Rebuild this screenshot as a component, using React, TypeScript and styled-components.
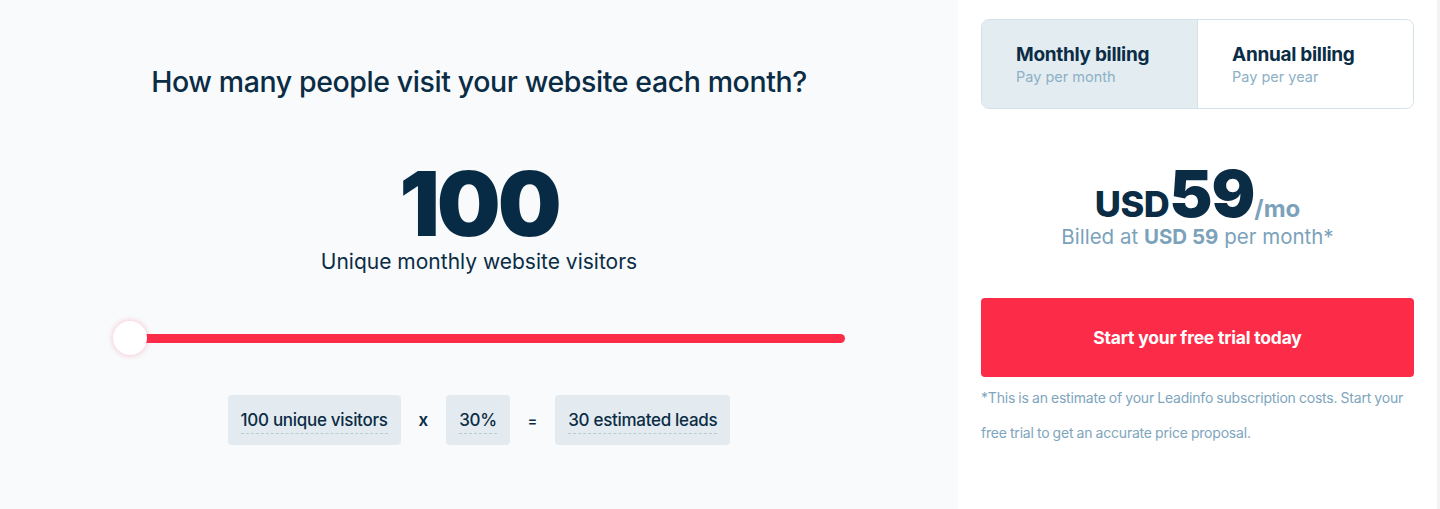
import React, { useState } from 'react';
import styled, { createGlobalStyle, css } from 'styled-components';

const navy = '#0b2c45';
const muted = '#7ba2ba';
const red = '#fc2c49';

const GlobalStyle = createGlobalStyle`
  html, body {
    margin: 0;
    padding: 0;
    background: #ffffff;
  }

  body {
    font-family: Inter, "Noto Sans", Arial, sans-serif;
    color: ${navy};
  }
`;

type Plan = 'monthly' | 'annual';

const plans: { id: Plan; title: string; sub: string }[] = [
  { id: 'monthly', title: 'Monthly billing', sub: 'Pay per month' },
  { id: 'annual', title: 'Annual billing', sub: 'Pay per year' },
];

const App: React.FC = () => {
  const [plan, setPlan] = useState<Plan>('monthly');
  const visitors = 100;
  const rate = 30;

  return (
    <Page>
      <GlobalStyle />
      <Calculator>
        <Question>How many people visit your website each month?</Question>
        <BigNumber>{visitors}</BigNumber>
        <Caption>Unique monthly website visitors</Caption>
        <Slider>
          <Track />
          <Thumb />
        </Slider>
        <Equation>
          <Term>
            <Underlined>{`${visitors} unique visitors`}</Underlined>
          </Term>
          <Operator>x</Operator>
          <Term>
            <Underlined>{`${rate}%`}</Underlined>
          </Term>
          <Operator small>=</Operator>
          <Term>
            <Underlined>{`${(visitors * rate) / 100} estimated leads`}</Underlined>
          </Term>
        </Equation>
      </Calculator>
      <Pricing>
        <Toggle>
          {plans.map((p) => (
            <ToggleOption
              key={p.id}
              active={plan === p.id}
              onClick={() => setPlan(p.id)}
            >
              <OptionTitle>{p.title}</OptionTitle>
              <OptionSub>{p.sub}</OptionSub>
            </ToggleOption>
          ))}
        </Toggle>
        <Price>
          <Currency>USD</Currency>
          <Amount>59</Amount>
          <Period>/mo</Period>
        </Price>
        <Billed>
          Billed at <strong>USD 59</strong> per month*
        </Billed>
        <TrialButton>Start your free trial today</TrialButton>
        <Disclaimer>
          *This is an estimate of your Leadinfo subscription costs. Start your
          free trial to get an accurate price proposal.
        </Disclaimer>
      </Pricing>
      <Edge />
    </Page>
  );
};

export default App;

const Page = styled.div`
  display: flex;
  width: 1440px;
  height: 509px;
  overflow: hidden;
`;

const Calculator = styled.section`
  width: 958px;
  flex-shrink: 0;
  background: #f8fafc;
  display: flex;
  flex-direction: column;
  align-items: center;
  padding-top: 64px;
  box-sizing: border-box;
`;

const Question = styled.h2`
  margin: 0;
  font-size: 28.5px;
  line-height: 36px;
  font-weight: 500;
  letter-spacing: -0.4px;
  color: ${navy};
`;

const BigNumber = styled.div`
  margin-top: 59px;
  font-size: 90px;
  line-height: 90px;
  font-weight: 900;
  letter-spacing: -3px;
  color: #072b44;
`;

const Caption = styled.div`
  font-size: 21px;
  line-height: 26px;
  font-weight: 400;
  color: ${navy};
`;

const Slider = styled.div`
  position: relative;
  width: 732px;
  height: 34px;
  margin-top: 46px;
  display: flex;
  align-items: center;
`;

const Track = styled.div`
  flex: 1;
  height: 9px;
  margin-left: 17px;
  border-radius: 5px;
  background: ${red};
`;

const Thumb = styled.div`
  position: absolute;
  left: 0;
  top: 0;
  width: 34px;
  height: 34px;
  border-radius: 50%;
  background: #ffffff;
  box-shadow: 0 0 5px 1px rgba(252, 44, 73, 0.22);
`;

const Equation = styled.div`
  display: flex;
  align-items: center;
  gap: 18px;
  margin-top: 40px;
`;

const Term = styled.div`
  height: 50px;
  padding: 0 13px;
  display: flex;
  align-items: center;
  border-radius: 4px;
  background: #e3ebf0;
`;

const Underlined = styled.span`
  font-size: 17px;
  line-height: 22px;
  font-weight: 500;
  letter-spacing: -0.3px;
  color: ${navy};
  border-bottom: 1px dashed #b9cbd6;
  padding-bottom: 2px;
  margin-top: 2px;
`;

const Operator = styled.span<{ small?: boolean }>`
  font-size: 17px;
  font-weight: 600;
  color: ${navy};
  ${({ small }) => small && css`
    font-size: 14px;
  `}
`;

const Pricing = styled.section`
  flex: 1;
  background: #ffffff;
  padding: 19px 23px 0 23px;
  display: flex;
  flex-direction: column;
  align-items: stretch;
`;

const Toggle = styled.div`
  display: flex;
  height: 90px;
  box-sizing: border-box;
  border: 1.5px solid #d2e1ea;
  border-radius: 8px;
  overflow: hidden;
`;

const ToggleOption = styled.div<{ active: boolean }>`
  flex: 1;
  padding: 24px 0 0 34px;
  box-sizing: border-box;
  cursor: pointer;
  background: #ffffff;

  & + & {
    border-left: 1.5px solid #d2e1ea;
  }

  ${({ active }) => active && css`
    background: #e3ecf1;
  `}
`;

const OptionTitle = styled.div`
  font-size: 19px;
  line-height: 22px;
  font-weight: 700;
  letter-spacing: -0.3px;
  color: ${navy};
`;

const OptionSub = styled.div`
  margin-top: 1px;
  font-size: 14.5px;
  line-height: 20px;
  font-weight: 400;
  color: #8db0c5;
`;

const Price = styled.div`
  margin-top: 53px;
  display: flex;
  justify-content: center;
  align-items: baseline;
  color: ${navy};
`;

const Currency = styled.span`
  font-size: 36px;
  line-height: 40px;
  font-weight: 800;
  letter-spacing: -0.5px;
`;

const Amount = styled.span`
  font-size: 65px;
  line-height: 64px;
  font-weight: 900;
  letter-spacing: -1px;
`;

const Period = styled.span`
  font-size: 24px;
  font-weight: 700;
  color: ${muted};
`;

const Billed = styled.div`
  text-align: center;
  font-size: 20.5px;
  line-height: 22px;
  font-weight: 400;
  color: ${muted};

  strong {
    font-weight: 700;
  }
`;

const TrialButton = styled.button`
  margin-top: 50px;
  height: 79px;
  border: none;
  border-radius: 4px;
  background: ${red};
  color: #ffffff;
  font-family: inherit;
  font-size: 17.5px;
  font-weight: 700;
  letter-spacing: -0.2px;
  cursor: pointer;
`;

const Disclaimer = styled.p`
  margin: 3px 0 0 0;
  font-size: 14px;
  line-height: 35px;
  font-weight: 400;
  letter-spacing: -0.2px;
  word-spacing: -0.5px;
  color: #7ea5bd;
`;

const Edge = styled.div`
  width: 3px;
  flex-shrink: 0;
  background: #f1f3f5;
`;
